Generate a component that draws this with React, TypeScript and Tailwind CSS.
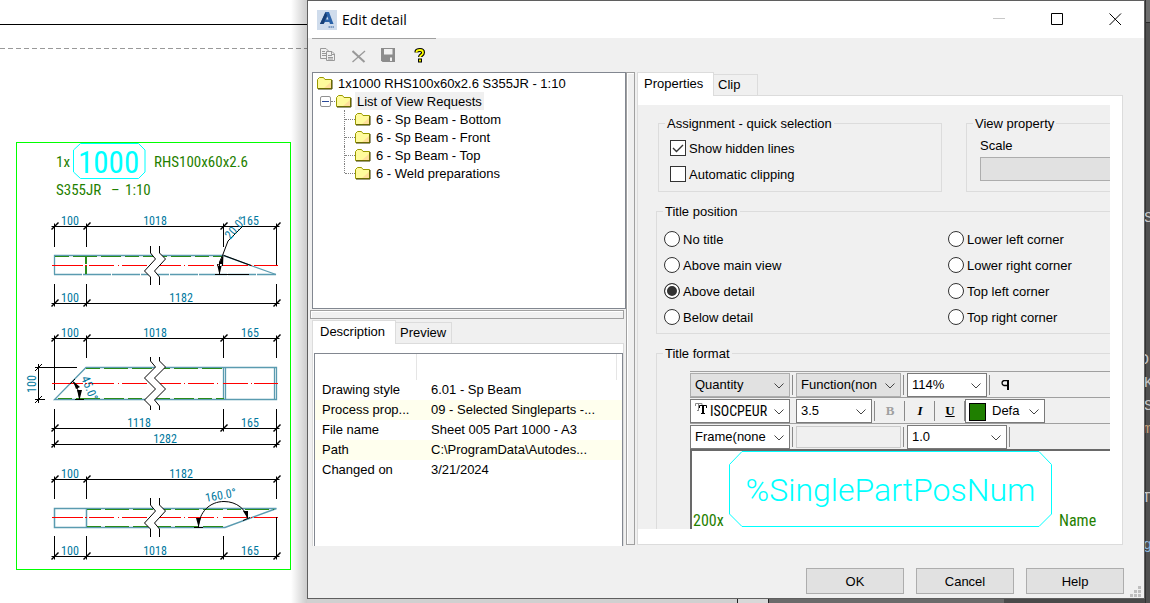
import { useState } from "react";
import type { ReactNode } from "react";
import clsx from "clsx";

const CAD = "font-['Roboto_Condensed',Roboto,sans-serif]";

/* ---------- drawing ---------- */

interface DimProps {
  y: number;
  ticks: number[];
  labels: [number, string][];
  /** far end of the extension lines, one for each tick */
  ext: number[];
}

function Dim({ y, ticks, labels, ext }: DimProps) {
  return (
    <g>
      <path
        d={`M${ticks[0] - 3} ${y}H${ticks[ticks.length - 1] + 3}`}
        stroke="#000"
      />
      {ticks.map((x, i) => (
        <g key={x} stroke="#000">
          <path d={`M${x} ${ext[i] > y ? y - 3 : y + 3}V${ext[i]}`} />
          <path d={`M${x - 3} ${y + 3}L${x + 4} ${y - 4}`} strokeWidth="1.4" />
        </g>
      ))}
      {labels.map(([x, text]) => (
        <text
          key={x}
          x={x}
          y={y - 2}
          textAnchor="middle"
          className="text-[12px]"
          fill="#0078a0"
        >
          {text}
        </text>
      ))}
    </g>
  );
}

function Axis({ y }: { y: number }) {
  return (
    <g fill="#ff0000">
      <rect x="52" y={y - 0.5} width="31" height="1" />
      <rect x="85" y={y - 0.5} width="2" height="1" />
      <rect x="89" y={y - 0.5} width="25" height="1" />
      <rect x="118" y={y - 0.5} width="1" height="1" />
      <rect x="122" y={y - 0.5} width="25" height="1" />
      <rect x="157" y={y - 0.5} width="24" height="1" />
      <rect x="184" y={y - 0.5} width="1" height="1" />
      <rect x="188" y={y - 0.5} width="26" height="1" />
      <rect x="217" y={y - 0.5} width="1" height="1" />
      <rect x="223" y={y - 0.5} width="25" height="1" />
      <rect x="251" y={y - 0.5} width="1" height="1" />
      <rect x="254" y={y - 0.5} width="24" height="1" />
    </g>
  );
}

function ShortBreak({ y }: { y: number }) {
  return (
    <g transform={`translate(0 ${y})`}>
      <path
        d="M150.500 0V7L155.500 13L144.500 25L150.500 31V39H159.500V31L154.500 25L165.500 13L159.500 7V0Z"
        fill="#fff"
      />
      <path
        d="M150.500 0V7L155.500 13L144.500 25L150.500 31V39M159.500 0V7L165.500 13L154.500 25L159.500 31V39"
        fill="none"
        stroke="#000"
      />
    </g>
  );
}

function DetailDrawing() {
  return (
    <svg
      width="307"
      height="603"
      viewBox="0 0 307 603"
      className={clsx("block", CAD)}
      role="img"
      aria-label="Beam detail"
    >
      <path d="M0 24.500H307" stroke="#000" />
      <path d="M0 48.500H307" stroke="#999" strokeDasharray="5 3" />
      <rect x="16.500" y="142.500" width="274" height="427" fill="none" stroke="#0f0" />

      <g fill="#1f7f00" className="text-[15px]">
        <text x="56" y="167">1x</text>
        <text x="154" y="167">RHS100x60x2.6</text>
        <text x="56" y="195">S355JR</text>
        <text x="111" y="195">–</text>
        <text x="125" y="195">1:10</text>
      </g>
      <text x="78" y="173" fill="#0ff" className="text-[31px]">1000</text>
      <path
        d="M80.500 143.500H138.500L145 150V172L138.500 178.500H80.500L73.500 172V150Z"
        fill="none"
        stroke="#0ff"
      />

      {/* top view */}
      <Dim
        y={226.5}
        ticks={[54.5, 86.5, 223.5, 276.5]}
        ext={[247, 247, 247, 266]}
        labels={[[70, "100"], [155, "1018"], [250, "165"]]}
      />
      <path d="M54.500 274.500V255.500H223L276 274.500" fill="none" stroke="#5a9bb0" strokeWidth="1.300" />
      <path d="M54 274.500H276" stroke="#5a9bb0" strokeWidth="1.300" strokeDasharray="28 1" />
      <path d="M55 256.500H222" stroke="#2a8a1a" strokeDasharray="14 4 24 4 20 4" />
      <path d="M86 256V274" stroke="#2a8a1a" strokeWidth="2" strokeDasharray="8 2" />
      <Axis y={265.5} />
      <path d="M224 255.500L251 265.500M215 274.500H249" stroke="#000" strokeWidth="1.200" />
      <path d="M219.500 274V262L222.500 255.500L228 241L242 227" fill="none" stroke="#000" />
      <path d="M223.500 254L218 266H223ZM219.500 275L217 264H222Z" fill="#000" />
      <text transform="translate(230 240) rotate(-48)" fill="#0078a0" className="text-[12px]">20.0°</text>
      <ShortBreak y={246} />
      <Dim
        y={303.5}
        ticks={[54.5, 86.5, 276.5]}
        ext={[284, 284, 284]}
        labels={[[70, "100"], [181, "1182"]]}
      />

      {/* front view */}
      <Dim
        y={338.5}
        ticks={[54.5, 86.5, 223.5, 276.5]}
        ext={[390, 358, 358, 358]}
        labels={[[70, "100"], [155, "1018"], [250, "165"]]}
      />
      <path
        d="M86 367.500H276.500V399.500H54.500ZM223.500 367V399M225.500 367V399M274.500 367V399"
        fill="none"
        stroke="#5a9bb0"
        strokeWidth="1.300"
      />
      <path
        d="M86 368.500H224M58 398.500H224"
        stroke="#2a8a1a"
        strokeDasharray="14 4 24 4 20 4"
      />
      <Axis y={383.5} />
      <path
        d="M150.500 357V361L155.500 367L144.500 378L155.500 389L144.500 400L150.500 406V410H159.500V406L154.500 400L165.500 389L154.500 378L165.500 367L159.500 361V357Z"
        fill="#fff"
      />
      <path
        d="M150.500 357V361L155.500 367L144.500 378L155.500 389L144.500 400L150.500 406V410M159.500 357V361L165.500 367L154.500 378L165.500 389L154.500 400L159.500 406V410"
        fill="none"
        stroke="#000"
      />
      <path
        d="M38.500 364V403M35 367.500H77M35 399.500H45M35 371L42 364M35 403L42 396M70 384L75 379"
        stroke="#000"
        fill="none"
      />
      <path d="M73 382Q79 388 79.500 399" fill="none" stroke="#000" />
      <path d="M73 381L80 387L76 389ZM79.500 400L77 390H82ZM75 399H84V400H75Z" fill="#000" />
      <text transform="translate(36 384) rotate(-90)" textAnchor="middle" fill="#0078a0" className="text-[12px]">100</text>
      <text transform="translate(81 378) rotate(68)" fill="#0078a0" className="text-[12px]">45.0°</text>
      <Dim
        y={428.5}
        ticks={[54.5, 223.5, 276.5]}
        ext={[409, 409, 409]}
        labels={[[139, "1118"], [250, "165"]]}
      />
      <Dim y={444.5} ticks={[54.5, 276.5]} ext={[409, 409]} labels={[[165, "1282"]]} />

      {/* bottom view */}
      <Dim
        y={479.5}
        ticks={[54.5, 86.5, 276.5]}
        ext={[499, 499, 499]}
        labels={[[70, "100"], [181, "1182"]]}
      />
      <path
        d="M54.500 508.500H276.500L225 527.500H54.500ZM86.500 508V527"
        fill="none"
        stroke="#5a9bb0"
        strokeWidth="1.500"
      />
      <path
        d="M87 509.500H274M87 526.500H224"
        stroke="#2a8a1a"
        strokeDasharray="14 4 24 4 20 4"
      />
      <Axis y={517.5} />
      <path d="M198.500 527C199 512 210 501.500 224 501.500C237 501.500 246 510 247.500 518" fill="none" stroke="#000" />
      <path d="M198.500 527L196 518H201ZM248 519L243 511H248ZM194 527H203V528H194ZM243 520L250 517V518L243 521Z" fill="#000" />
      <text transform="translate(206 502) rotate(-10)" fill="#0078a0" className="text-[12px]">160.0°</text>
      <ShortBreak y={498} />
      <Dim
        y={556.5}
        ticks={[54.5, 86.5, 223.5, 276.5]}
        ext={[536, 536, 536, 517]}
        labels={[[70, "100"], [155, "1018"], [250, "165"]]}
      />
    </svg>
  );
}

/* ---------- small pieces ---------- */

function AppLogo() {
  return (
    <svg width="20" height="20" viewBox="0 0 20 20" className="shrink-0">
      <rect width="20" height="20" fill="#cfdcec" />
      <path d="M3 14L8.500 2H12L16.500 14H13L12.300 12H8L6.500 14Z" fill="#2a62a8" />
      <path d="M3 14L8.500 2L10 5.500L6.500 14Z" fill="#173f75" />
      <path d="M9.200 9.500L10.300 6.500L11.500 9.500Z" fill="#cfdcec" />
      <path d="M11.500 17H17" stroke="#7d9cc4" strokeWidth="2" strokeDasharray="1.500 .5" />
    </svg>
  );
}

function Folder() {
  return (
    <svg width="16" height="14" viewBox="0 0 16 14" className="shrink-0">
      <path d="M.5 12.500V3.500L2.500 1.500H6.500L8 3.500H14.500V12.500Z" fill="#fffb9c" stroke="#9a9a00" />
      <path d="M7 12L14 6V12Z" fill="#ffdf9a" />
      <path d="M1 13H15V4" fill="none" stroke="#3c3c00" />
    </svg>
  );
}

function FontMark() {
  return (
    <svg
      width="12"
      height="12"
      viewBox="0 0 12 12"
      fill="none"
      className="pointer-events-none absolute top-1 left-[5px]"
    >
      <path d="M.5 3V.5H7V2M3.500 .5V7M2 7.500H4" stroke="#888" />
      <path d="M4.500 5V2.500H11.500V5M6 10.500H10" stroke="#000" />
      <path d="M8 3V10" stroke="#000" strokeWidth="2" />
    </svg>
  );
}

function Chevron() {
  return (
    <svg
      width="10"
      height="6"
      viewBox="0 0 10 6"
      className="pointer-events-none absolute top-1/2 right-1.5 -mt-0.5"
    >
      <path d="M.5 .5L5 5L9.500 .5" fill="none" stroke="#444" />
    </svg>
  );
}

interface ComboProps {
  label: string;
  value: string;
  width: string;
  gray?: boolean;
  font?: string;
  pad?: string;
  children?: ReactNode;
}

function Combo({ label, value, width, gray, font, pad = "pl-1", children }: ComboProps) {
  return (
    <div className={clsx("relative h-6 shrink-0", width)}>
      <select
        aria-label={label}
        className={clsx(
          "block h-full w-full appearance-none border pr-4",
          gray ? "border-[#adadad] bg-[#e1e1e1]" : "border-[#7a7a7a] bg-white",
          font,
          pad
        )}
      >
        <option>{value}</option>
      </select>
      {children}
      <Chevron />
    </div>
  );
}

function Sep({ tight }: { tight?: boolean }) {
  return (
    <span
      className={clsx("ml-0.5 h-5 w-px shrink-0 bg-[#8a8a8a]", !tight && "mr-[3px]")}
    />
  );
}

function Group({ title, className, children }: { title: string; className?: string; children: ReactNode }) {
  return (
    <fieldset className={clsx("min-w-0 border border-[#dcdcdc]", className)}>
      <legend className="ml-1.5 px-0.5 pt-0.5 leading-[18px]">{title}</legend>
      {children}
    </fieldset>
  );
}

function Check({ text, on }: { text: string; on?: boolean }) {
  return (
    <label className="flex h-[26px] items-center gap-[3px]">
      <span className="relative size-4">
        <input
          type="checkbox"
          defaultChecked={on}
          className="peer block size-4 appearance-none border border-[#333] bg-white"
        />
        <svg
          viewBox="0 0 16 16"
          className="pointer-events-none absolute inset-0 hidden size-4 peer-checked:block"
        >
          <path d="M3 8L6.500 11.500L13 5" fill="none" stroke="#333" strokeWidth="1.400" />
        </svg>
      </span>
      <span className="pt-0.5">{text}</span>
    </label>
  );
}

function Tab({ text, active, className, onClick }: { text: string; active: boolean; className?: string; onClick: () => void }) {
  return (
    <button
      type="button"
      role="tab"
      aria-selected={active}
      onClick={onClick}
      className={clsx(
        "border border-b-0 border-[#dcdcdc] text-left",
        active ? "relative -mb-px h-6 bg-white pb-0.5" : "h-[21px] border-l-0 bg-[#f0f0f0]",
        className
      )}
    >
      {text}
    </button>
  );
}

/* ---------- data ---------- */

const requests = [
  "6 - Sp Beam - Bottom",
  "6 - Sp Beam - Front",
  "6 - Sp Beam - Top",
  "6 - Weld preparations",
];

const info = [
  ["Drawing style", "6.01 - Sp Beam"],
  ["Process prop...", "09 - Selected Singleparts -..."],
  ["File name", "Sheet 005 Part 1000 - A3"],
  ["Path", "C:\\ProgramData\\Autodes..."],
  ["Changed on", "3/21/2024"],
];

// read row by row: left column, right column
const positions = [
  "No title",
  "Lower left corner",
  "Above main view",
  "Lower right corner",
  "Above detail",
  "Top left corner",
  "Below detail",
  "Top right corner",
];

/* ---------- panels ---------- */

function TitleBar() {
  return (
    <header className="flex h-[37px] items-center bg-white pl-[9px]">
      <AppLogo />
      <h1 className="ml-[5px] flex-1 font-['Open_Sans',sans-serif] text-[14px]">Edit detail</h1>
      <button type="button" aria-label="Minimize" className="flex h-full w-[58px] items-center justify-center">
        <svg width="13" height="13"><path d="M0 5.500H12" stroke="#c8c8c8" /></svg>
      </button>
      <button type="button" aria-label="Maximize" className="flex h-full w-[58px] items-center justify-center">
        <svg width="13" height="13"><path d="M.5 .5H11.500V11.500H.5Z" fill="none" stroke="#000" /></svg>
      </button>
      <button type="button" aria-label="Close" className="flex h-full w-[58px] items-center justify-center">
        <svg width="13" height="13"><path d="M.5 .5L12 12M12 .5L.5 12" stroke="#000" /></svg>
      </button>
    </header>
  );
}

function Toolbar() {
  return (
    <div className="h-[34px] pl-1">
      <div className="flex h-full w-[124px] items-center border-t border-[#a0a0a0] pl-2">
        <button type="button" aria-label="Copy" className="mr-4">
          <svg width="16" height="16" viewBox="0 0 16 16" fill="#f0f0f0" stroke="#999">
            <path d="M.5 .5H6L8.500 3V10.500H.5ZM2 3.500H5M2 5.500H6M2 7.500H6" />
            <path d="M6.500 3.500H12L14.500 6V12.500H6.500ZM8 7.500H12M8 9.500H13M8 11H13M11.500 4V6.500H14" />
          </svg>
        </button>
        <button type="button" aria-label="Delete" className="mr-3">
          <svg width="16" height="16" viewBox="0 0 16 16" fill="none" stroke="#999">
            <path d="M.5 3L12.500 14" strokeWidth="2" />
            <path d="M13 3L.5 14" strokeWidth="1.300" />
          </svg>
        </button>
        <button type="button" aria-label="Save" className="mr-[18px]">
          <svg width="16" height="16" viewBox="0 0 16 16">
            <path d="M1 0H15V14H2.500L1 12.500Z" fill="#8c8c8c" />
            <path d="M4 1H12.500V6.500H4ZM10 9.500H12V13H10Z" fill="#f0f0f0" />
          </svg>
        </button>
        <button type="button" aria-label="Help topics">
          <svg width="12" height="16" viewBox="0 0 12 16" fill="none">
            <path d="M2.500 4.500V3.500Q3 2 6 2T9 4.500Q9 6 7.500 7T6 9" stroke="#000" strokeWidth="4" />
            <path d="M4 10.500H8V14.500H4Z" fill="#000" />
            <path d="M2.500 4.500V3.500Q3 2 6 2T9 4.500Q9 6 7.500 7T6 9M6 11.500V13.500" stroke="#ff0" strokeWidth="1.800" />
          </svg>
        </button>
      </div>
    </div>
  );
}

function Tree() {
  return (
    <ul className="ml-0.5 h-[237px] border border-[#828790] bg-white py-px leading-[16px]">
      <li className="flex h-[18px] items-center gap-[5px] pl-1">
        <Folder />
        <span className="pt-0.5">1x1000 RHS100x60x2.6 S355JR - 1:10</span>
      </li>
      <li className="pl-[7px]">
        <div className="flex h-[18px] items-center">
          <button
            type="button"
            aria-label="Collapse"
            className="flex size-[11px] items-center justify-center rounded-xs border border-[#919191] bg-white"
          >
            <span className="h-px w-[7px] bg-[#2b4a9a]" />
          </button>
          <span className="mr-px w-1 border-t border-dotted border-[#808080]" />
          <Folder />
          <span className="ml-[3px] bg-[#f0f0f0] px-0.5 pt-0.5">List of View Requests</span>
        </div>
        <ul className="pl-6">
          {requests.map((r, i) => (
            <li key={r} className="flex h-[18px] items-center">
              <span
                className={clsx(
                  "border-l border-dotted border-[#808080]",
                  i === requests.length - 1 ? "h-[9px] self-start" : "h-[18px]"
                )}
              />
              <span className="w-2.5 border-t border-dotted border-[#808080]" />
              <Folder />
              <span className="ml-[5px] pt-0.5">{r}</span>
            </li>
          ))}
        </ul>
      </li>
    </ul>
  );
}

function LeftPane() {
  const [tab, setTab] = useState("Description");
  return (
    <div className="flex w-[316px] shrink-0 flex-col">
      <Tree />
      <div className="mt-px mr-0.5 h-[9px] border border-[#a0a0a0] bg-[#f0f0f0] shadow-[inset_1px_1px_0_#fff]" />
      <div role="tablist" className="mt-px ml-0.5 flex items-end">
        <Tab text="Description" active={tab === "Description"} className="w-[84px] pl-[7px]" onClick={() => setTab("Description")} />
        <Tab text="Preview" active={tab === "Preview"} className="w-14 pl-1" onClick={() => setTab("Preview")} />
      </div>
      <div className="mr-0.5 ml-0.5 flex flex-1 flex-col border border-b-0 border-[#dcdcdc] bg-white pt-[9px] pl-px">
        <div className="flex-1 border border-b-0 border-[#828790]">
          <table className="w-full table-fixed text-left">
            <thead>
              <tr className="h-[26px]">
                <th aria-label="Name" className="w-[101px] border-r border-[#e5e5e5]" />
                <th aria-label="Value" className="w-[200px] border-r border-[#e5e5e5]" />
                <th />
              </tr>
            </thead>
            <tbody>
              {info.map(([name, value]) => (
                <tr key={name} className="h-5 leading-5 even:bg-[#ffffee]">
                  <td className="pl-[7px] whitespace-nowrap">{name}</td>
                  <td className="pl-[15px] whitespace-nowrap">{value}</td>
                  <td />
                </tr>
              ))}
            </tbody>
          </table>
        </div>
      </div>
    </div>
  );
}

function TitleEditor() {
  return (
    <div className="mt-2 ml-[33px]">
      <div className="flex h-[26px] items-center border-t border-[#a0a0a0] pt-px">
        <Combo label="Token" value="Quantity" width="w-[100px]" gray />
        <Sep />
        <Combo label="Function" value="Function(non" width="w-[105px]" gray />
        <Sep />
        <Combo label="Zoom" value="114%" width="w-20" />
        <Sep />
        <button type="button" aria-label="Paragraph" className="w-6">
          <svg width="9" height="11" viewBox="0 0 9 11" className="mx-auto">
            <path d="M7 0V10" stroke="#000" strokeWidth="2" />
            <path d="M7 .5H3Q1 1 1 3T3 5.500H7" fill="none" stroke="#000" strokeWidth="1.300" />
          </svg>
        </button>
      </div>
      <div className="flex h-[26px] items-center border-t border-[#a0a0a0] pt-px">
        <Combo
          label="Font"
          value="ISOCPEUR"
          width="w-[100px]"
          pad="pl-[19px]"
          font={clsx(CAD, "text-[14px]")}
        >
          <FontMark />
        </Combo>
        <span className="w-1.5 shrink-0" />
        <Combo label="Text height" value="3.5" width="w-[76px]" />
        <Sep />
        <button type="button" className="w-6 font-['Liberation_Serif',serif] font-bold text-[#a0a0a0]">B</button>
        <Sep />
        <button type="button" className="w-6 font-['Liberation_Serif',serif] font-bold italic">I</button>
        <Sep />
        <button type="button" className="w-6 font-['Liberation_Serif',serif] font-bold underline">U</button>
        <Sep tight />
        <Combo label="Color" value="Defa" width="w-20" pad="pl-[26px]">
          <span className="pointer-events-none absolute top-1 left-1 h-[18px] w-[17px] border border-black bg-[#1f7f00]" />
        </Combo>
      </div>
      <div className="flex h-[26px] items-center border-t border-[#a0a0a0] pt-px">
        <Combo label="Frame" value="Frame(none" width="w-[100px]" />
        <Sep />
        <input
          disabled
          aria-label="Frame size"
          className="h-[22px] w-[105px] shrink-0 border border-[#ccc] bg-[#f0f0f0]"
        />
        <Sep />
        <Combo label="Line spacing" value="1.0" width="w-[100px]" />
        <Sep />
      </div>
      <div
        className={clsx(
          "flex h-20 items-start border-t-2 border-l-2 border-[#696969] bg-white pl-px text-[16px] leading-4",
          CAD
        )}
      >
        <span className="w-9 pt-[62px] text-[#1f7f00]">200x</span>
        <span className="relative flex h-[76px] w-[323px] shrink-0 items-center justify-center pt-0.5 font-[Roboto] text-[32px] leading-10 font-light text-[#0ff]">
          <svg width="323" height="76" className="absolute inset-0">
            <path
              d="M13 .5H310L322.500 13.500V63L310 75.500H13L.5 63V13.500Z"
              fill="none"
              stroke="#0ff"
            />
          </svg>
          %SinglePartPosNum
        </span>
        <span className="ml-[7px] pt-[62px] text-[#1f7f00]">Name</span>
      </div>
    </div>
  );
}

function RightPane() {
  const [tab, setTab] = useState("Properties");
  const [pos, setPos] = useState("Above detail");
  return (
    <div className="mr-[21px] ml-0.5 flex min-w-0 flex-1 flex-col">
      <div role="tablist" className="flex items-end">
        <Tab text="Properties" active={tab === "Properties"} className="w-[77px] pl-1.5" onClick={() => setTab("Properties")} />
        <Tab text="Clip" active={tab === "Clip"} className="w-11 pl-1" onClick={() => setTab("Clip")} />
      </div>
      <div className="mb-px flex-1 border border-[#dcdcdc] bg-white pt-[9px] pr-3 pb-[15px]">
        <div className="overflow-hidden bg-[#f0f0f0] pt-2">
          <div className="flex gap-6 pl-5">
            <Group title="Assignment - quick selection" className="w-[284px] shrink-0">
              <div className="pt-0.5 pb-1 pl-[11px]">
                <Check text="Show hidden lines" on />
                <Check text="Automatic clipping" />
              </div>
            </Group>
            <Group title="View property" className="flex-1 border-r-0">
              <div className="pb-2.5 pl-[13px]">
                <label htmlFor="scale" className="block h-6 leading-[26px]">Scale</label>
                <select
                  id="scale"
                  className="block h-6 w-full appearance-none border border-r-0 border-[#adadad] bg-[#e1e1e1]"
                />
              </div>
            </Group>
          </div>
          <Group title="Title position" className="mt-[9px] ml-[18px] border-r-0">
            <div className="grid grid-cols-[284px_1fr] pt-[5px] pb-[3px] pl-[7px]">
              {positions.map((p) => (
                <label key={p} className="flex h-[26px] items-center gap-[3px]">
                  <input
                    type="radio"
                    name="position"
                    checked={pos === p}
                    onChange={() => setPos(p)}
                    className="size-4 appearance-none rounded-full border border-[#333] bg-white checked:bg-[#333] checked:shadow-[inset_0_0_0_2px_#fff]"
                  />
                  <span className="pt-0.5">{p}</span>
                </label>
              ))}
            </div>
          </Group>
          <Group title="Title format" className="mt-[9px] ml-[18px] border-r-0 border-b-0">
            <TitleEditor />
          </Group>
        </div>
      </div>
    </div>
  );
}

function Footer() {
  return (
    <footer className="flex h-[52px] justify-end gap-3 pt-[22px] pr-0.5">
      {["OK", "Cancel", "Help"].map((t) => (
        <button
          key={t}
          type="button"
          className="h-[26px] w-[98px] border border-[#adadad] bg-[#e1e1e1] pt-0.5"
        >
          {t}
        </button>
      ))}
      <svg width="12" height="12" className="-ml-1.5 self-end" fill="#bfbfbf">
        <path d="M0 8h3v3H0zM4 8h3v3H4zM8 8h3v3H8zM4 4h3v3H4zM8 4h3v3H8zM8 0h3v3H8z" />
      </svg>
    </footer>
  );
}

/** sliver of the code window that shows past the dialog's right edge */
function CodeEdge() {
  return (
    <div className="w-[5px] shrink-0 bg-[#505050]">
      <svg
        width="5"
        height="603"
        aria-hidden="true"
        className="block font-['Liberation_Mono',monospace] text-[15px]"
        fill="#c8c8c8"
      >
        <path d="M0 0H5V22H0Z" fill="#6e6e6e" />
        <path d="M0 22.500H5" stroke="#2b2b2b" />
        <path d="M.5 0V603" stroke="#333" />
        <text x="-1" y="222">S</text>
        <text x="-5" y="364">D</text>
        <text x="-1" y="387">K</text>
        <text x="-1" y="410">S</text>
        <text x="-2" y="433" fill="#c9a27a">m</text>
        <text x="-3" y="502">T</text>
        <text x="-2" y="549" fill="#8fb8dc">g</text>
      </svg>
    </div>
  );
}

export default function App() {
  return (
    <div className="flex min-h-screen bg-white font-['Liberation_Sans',Arial,sans-serif] text-[13px] text-black">
      <div className="relative w-[307px] shrink-0">
        <DetailDrawing />
        <div className="absolute inset-y-0 right-0 w-4 bg-linear-to-l from-black/20 to-transparent" />
      </div>
      <div className="flex min-w-0 flex-1 flex-col">
        <main className="flex flex-1 flex-col border border-[#5f5f5f] bg-[#f0f0f0]">
          <TitleBar />
          <Toolbar />
          <div className="flex flex-1 pl-0.5">
            <LeftPane />
            <div className="mb-px w-[9px] shrink-0 border border-[#a0a0a0] bg-[#f0f0f0] shadow-[inset_1px_1px_0_#fff]" />
            <RightPane />
          </div>
          <Footer />
        </main>
        <div className="flex h-1">
          <div className="w-[430px] bg-[#d0d0d0]" />
          <div className="w-8 border-x border-[#222] bg-[#d8d8d8]" />
          <div className="w-[235px] bg-[#6b6b6b]" />
          <div className="flex-1 bg-[#4a4a4a]" />
        </div>
      </div>
      <CodeEdge />
    </div>
  );
}
